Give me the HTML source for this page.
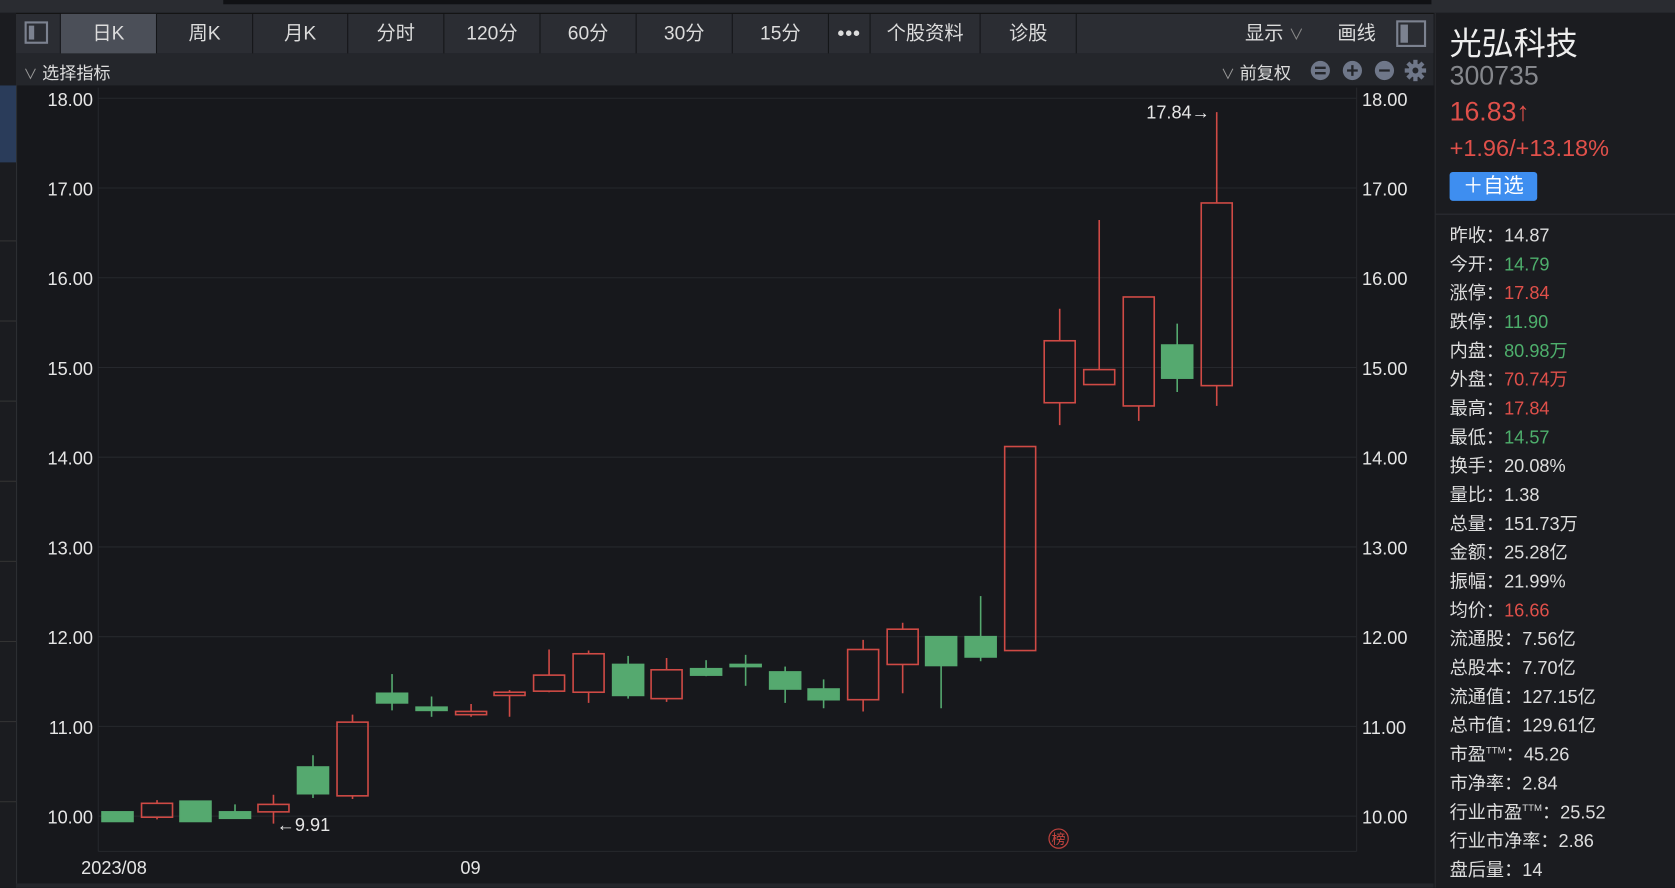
<!DOCTYPE html>
<html><head><meta charset="utf-8">
<style>
html,body{margin:0;padding:0;background:#17181c;overflow:hidden;width:1675px;height:888px}
#w{position:absolute;left:0;top:0;width:1568px;height:831px;transform:scale(1.06824);transform-origin:0 0;font-family:"Liberation Sans","Noto Sans CJK SC",sans-serif;background:#17181c;color:#e6e6e6}
.abs{position:absolute}
#top{left:0;top:0;width:1568px;height:12px;background:#2a2c31}
#topbar{left:209px;top:0;width:1131px;height:4px;background:#101114}
#side{left:0;top:12px;width:15px;height:819px;background:#1b1c20;border-right:1px solid #2c2e33}
#tb{left:15px;top:12px;width:1327px;height:37px;background:#2b2d33;border-top:1px solid #111;border-bottom:1px solid #111}
.btn{position:absolute;top:0;height:37px;line-height:37px;text-align:center;font-size:18px;color:#dcdcdc;border-right:1px solid #141518}
#row2{left:15px;top:50px;width:1327px;height:30px;background:#24262b}
#rp{left:1343px;top:12px;width:225px;height:819px;background:#1b1c20;border-left:1px solid #2a2c30}
.r{position:absolute;left:13px;font-size:17px;color:#dedede;white-space:nowrap}
.g{color:#4eaf6c}.rd{color:#e0504a}
</style></head><body><div id="w">
<div class="abs" id="top"></div><div class="abs" id="topbar"></div>
<div class="abs" id="side">
 <div class="abs" style="left:0;top:68px;width:15px;height:72px;background:#2a3c5a"></div>
 <div class="abs" style="left:0;top:213px;width:15px;height:1px;background:#333"></div>
 <div class="abs" style="left:0;top:288px;width:15px;height:1px;background:#333"></div>
 <div class="abs" style="left:0;top:363px;width:15px;height:1px;background:#333"></div>
 <div class="abs" style="left:0;top:438px;width:15px;height:1px;background:#333"></div>
 <div class="abs" style="left:0;top:513px;width:15px;height:1px;background:#333"></div>
 <div class="abs" style="left:0;top:588px;width:15px;height:1px;background:#333"></div>
 <div class="abs" style="left:0;top:663px;width:15px;height:1px;background:#333"></div>
 <div class="abs" style="left:0;top:738px;width:15px;height:1px;background:#333"></div>
</div>
<div class="abs" id="tb">
 <div class="btn" style="left:0;width:41px"><div style="position:absolute;left:8px;top:7px;width:22px;height:21px;border:2px solid #7c8290;box-sizing:border-box"><div style="position:absolute;left:2px;top:2px;width:5px;height:13px;background:#7c8290"></div></div></div>
 <div class="btn" style="left:42px;width:89px;background:#4b4f58">日K</div>
 <div class="btn" style="left:132px;width:89px">周K</div>
 <div class="btn" style="left:222px;width:88px">月K</div>
 <div class="btn" style="left:311px;width:89px">分时</div>
 <div class="btn" style="left:401px;width:89px">120分</div>
 <div class="btn" style="left:491px;width:89px">60分</div>
 <div class="btn" style="left:581px;width:89px">30分</div>
 <div class="btn" style="left:671px;width:89px">15分</div>
 <div class="btn" style="left:761px;width:38px;font-weight:bold;letter-spacing:1px">•••</div>
 <div class="btn" style="left:800px;width:102px">个股资料</div>
 <div class="btn" style="left:903px;width:89px">诊股</div>
 <div class="btn" style="left:1143px;width:70px;border:none">显示 <span style="color:#888;font-size:14px">∨</span></div>
 <div class="btn" style="left:1225px;width:60px;border:none">画线</div>
 <div style="position:absolute;left:1292px;top:6px;width:28px;height:25px;border:2px solid #7c8290;box-sizing:border-box"><div style="position:absolute;left:2px;top:2px;width:7px;height:17px;background:#7c8290"></div></div>
</div>
<div class="abs" id="row2">
 <div class="abs" style="left:7px;top:5px;font-size:16px;color:#ddd"><span style="color:#999;font-size:13px">∨</span> 选择指标</div>
 <div class="abs" style="left:1128px;top:5px;font-size:16px;color:#ddd"><span style="color:#999;font-size:13px">∨</span> 前复权</div>
 <svg class="abs" style="left:1210px;top:5px" width="120" height="22">
  <g fill="#6f7789"><circle cx="11" cy="11" r="9"/><circle cx="41" cy="11" r="9"/><circle cx="71" cy="11" r="9"/></g>
  <g stroke="#24262b" stroke-width="2.2"><line x1="6" y1="8.5" x2="16" y2="8.5"/><line x1="6" y1="13.5" x2="16" y2="13.5"/><line x1="36" y1="11" x2="46" y2="11"/><line x1="41" y1="6" x2="41" y2="16"/><line x1="66" y1="11" x2="76" y2="11"/></g>
  <g transform="translate(100,11)" fill="#6f7789"><circle r="6.5"/><g><rect x="-2" y="-10" width="4" height="20"/><rect x="-2" y="-10" width="4" height="20" transform="rotate(45)"/><rect x="-2" y="-10" width="4" height="20" transform="rotate(90)"/><rect x="-2" y="-10" width="4" height="20" transform="rotate(135)"/></g><circle r="2.8" fill="#24262b"/></g>
 </svg>
</div>
<svg class="abs" style="left:15px;top:80px" width="1327" height="751" viewBox="15 80 1327 751" font-family="Liberation Sans, sans-serif">
 <g stroke="#26282d" stroke-width="1">
  <line x1="92" y1="92" x2="1270" y2="92"/><line x1="92" y1="176" x2="1270" y2="176"/><line x1="92" y1="260" x2="1270" y2="260"/><line x1="92" y1="344" x2="1270" y2="344"/><line x1="92" y1="428" x2="1270" y2="428"/><line x1="92" y1="512" x2="1270" y2="512"/><line x1="92" y1="596" x2="1270" y2="596"/><line x1="92" y1="680" x2="1270" y2="680"/><line x1="92" y1="764" x2="1270" y2="764"/>
  <line x1="92" y1="797" x2="1270" y2="797"/><line x1="92" y1="82" x2="92" y2="797"/><line x1="1270" y1="82" x2="1270" y2="797"/>
 </g>
 <g fill="#e6e6e6" font-size="17" text-anchor="end">
  <text x="87" y="99">18.00</text><text x="87" y="183">17.00</text><text x="87" y="267">16.00</text><text x="87" y="351">15.00</text><text x="87" y="435">14.00</text><text x="87" y="519">13.00</text><text x="87" y="603">12.00</text><text x="87" y="687">11.00</text><text x="87" y="771">10.00</text>
 </g>
 <g fill="#e6e6e6" font-size="17">
  <text x="1275" y="99">18.00</text><text x="1275" y="183">17.00</text><text x="1275" y="267">16.00</text><text x="1275" y="351">15.00</text><text x="1275" y="435">14.00</text><text x="1275" y="519">13.00</text><text x="1275" y="603">12.00</text><text x="1275" y="687">11.00</text><text x="1275" y="771">10.00</text>
  <text x="76" y="818">2023/08</text><text x="431" y="818">09</text>
  <text x="259" y="778">←9.91</text><text x="1073" y="111">17.84→</text>
 </g>
 <g fill="#55a96f" stroke="#55a96f" stroke-width="1.5">
  <rect x="95.5" y="760" width="29" height="9"/>
  <rect x="168.5" y="750" width="29" height="19"/>
  <line x1="220" y1="753" x2="220" y2="760"/><rect x="205.5" y="760" width="29" height="6"/>
  <line x1="293" y1="707" x2="293" y2="747"/><rect x="278.5" y="718" width="29" height="25"/>
  <line x1="367" y1="631" x2="367" y2="665"/><rect x="352.5" y="649" width="29" height="9"/>
  <line x1="404" y1="652" x2="404" y2="671"/><rect x="389.5" y="662" width="29" height="3"/>
  <line x1="588" y1="614" x2="588" y2="654"/><rect x="573.5" y="622" width="29" height="29"/>
  <line x1="661" y1="618" x2="661" y2="633"/><rect x="646.5" y="626" width="29" height="6"/>
  <line x1="698" y1="613" x2="698" y2="642"/><rect x="683.5" y="622" width="29" height="2"/>
  <line x1="735" y1="624" x2="735" y2="658"/><rect x="720.5" y="629" width="29" height="16"/>
  <line x1="771" y1="636" x2="771" y2="663"/><rect x="756.5" y="645" width="29" height="10"/>
  <line x1="881" y1="596" x2="881" y2="663"/><rect x="866.5" y="596" width="29" height="27"/>
  <line x1="918" y1="558" x2="918" y2="619"/><rect x="903.5" y="596" width="29" height="19"/>
  <line x1="1102" y1="303" x2="1102" y2="367"/><rect x="1087.5" y="323" width="29" height="31"/>
 </g>
 <g fill="none" stroke="#cf4a45" stroke-width="1.5">
  <path d="M147 749V752M147 765V767"/><rect x="132.5" y="752" width="29" height="13"/>
  <path d="M256 744V753M256 760V771"/><rect x="241.5" y="753" width="29" height="7"/>
  <path d="M330 669V676M330 745V748"/><rect x="315.5" y="676" width="29" height="69"/>
  <path d="M441 659V666M441 669V671"/><rect x="426.5" y="666" width="29" height="3"/>
  <path d="M477 646V648M477 651V671"/><rect x="462.5" y="648" width="29" height="3"/>
  <path d="M514 608V632M514 647V648"/><rect x="499.5" y="632" width="29" height="15"/>
  <path d="M551 609V612M551 648V658"/><rect x="536.5" y="612" width="29" height="36"/>
  <path d="M624 616V627M624 654V657"/><rect x="609.5" y="627" width="29" height="27"/>
  <path d="M808 599V608M808 655V666"/><rect x="793.5" y="608" width="29" height="47"/>
  <path d="M845 583V589M845 622V649"/><rect x="830.5" y="589" width="29" height="33"/>
  <rect x="940.5" y="418" width="29" height="191"/>
  <path d="M992 289V319M992 377V398"/><rect x="977.5" y="319" width="29" height="58"/>
  <path d="M1029 206V346"/><rect x="1014.5" y="346" width="29" height="14"/>
  <path d="M1066 380V394"/><rect x="1051.5" y="278" width="29" height="102"/>
  <path d="M1139 105V190M1139 361V380"/><rect x="1124.5" y="190" width="29" height="171"/>
 </g>
 <circle cx="991" cy="785" r="9" fill="none" stroke="#b8403c" stroke-width="1.2"/>
 <text x="991" y="790" font-size="13" fill="#c8453f" text-anchor="middle" font-family="Noto Sans CJK SC, sans-serif">榜</text>
</svg>
<div class="abs" id="rp">
 <div class="r" style="top:4px;font-size:30px;color:#eee">光弘科技</div>
 <div class="r" style="top:45px;font-size:25px;color:#85878c">300735</div>
 <div class="r rd" style="top:79px;font-size:25px">16.83↑</div>
 <div class="r rd" style="top:114px;font-size:22px">+1.96/+13.18%</div>
 <div class="abs" style="left:13px;top:149px;width:82px;height:27px;background:#3e8ef0;border-radius:3px;color:#fff;font-size:19px;line-height:27px;text-align:center">＋自选</div>
 <div class="abs" style="left:0;top:188px;width:225px;height:1px;background:#2c2e33"></div>
 <div class="r" style="top:194px">昨收：14.87</div>
 <div class="r" style="top:221px">今开：<span class="g">14.79</span></div>
 <div class="r" style="top:248px">涨停：<span class="rd">17.84</span></div>
 <div class="r" style="top:275px">跌停：<span class="g">11.90</span></div>
 <div class="r" style="top:302px">内盘：<span class="g">80.98万</span></div>
 <div class="r" style="top:329px">外盘：<span class="rd">70.74万</span></div>
 <div class="r" style="top:356px">最高：<span class="rd">17.84</span></div>
 <div class="r" style="top:383px">最低：<span class="g">14.57</span></div>
 <div class="r" style="top:410px">换手：20.08%</div>
 <div class="r" style="top:437px">量比：1.38</div>
 <div class="r" style="top:464px">总量：151.73万</div>
 <div class="r" style="top:491px">金额：25.28亿</div>
 <div class="r" style="top:518px">振幅：21.99%</div>
 <div class="r" style="top:545px">均价：<span class="rd">16.66</span></div>
 <div class="r" style="top:572px">流通股：7.56亿</div>
 <div class="r" style="top:599px">总股本：7.70亿</div>
 <div class="r" style="top:626px">流通值：127.15亿</div>
 <div class="r" style="top:653px">总市值：129.61亿</div>
 <div class="r" style="top:680px">市盈<sup style="font-size:9px">TTM</sup>：45.26</div>
 <div class="r" style="top:707px">市净率：2.84</div>
 <div class="r" style="top:734px">行业市盈<sup style="font-size:9px">TTM</sup>：25.52</div>
 <div class="r" style="top:761px">行业市净率：2.86</div>
 <div class="r" style="top:788px">盘后量：14</div>
</div>
<div class="abs" style="left:15px;top:827px;width:1327px;height:4px;background:#24262b"></div>
</div></body></html>
